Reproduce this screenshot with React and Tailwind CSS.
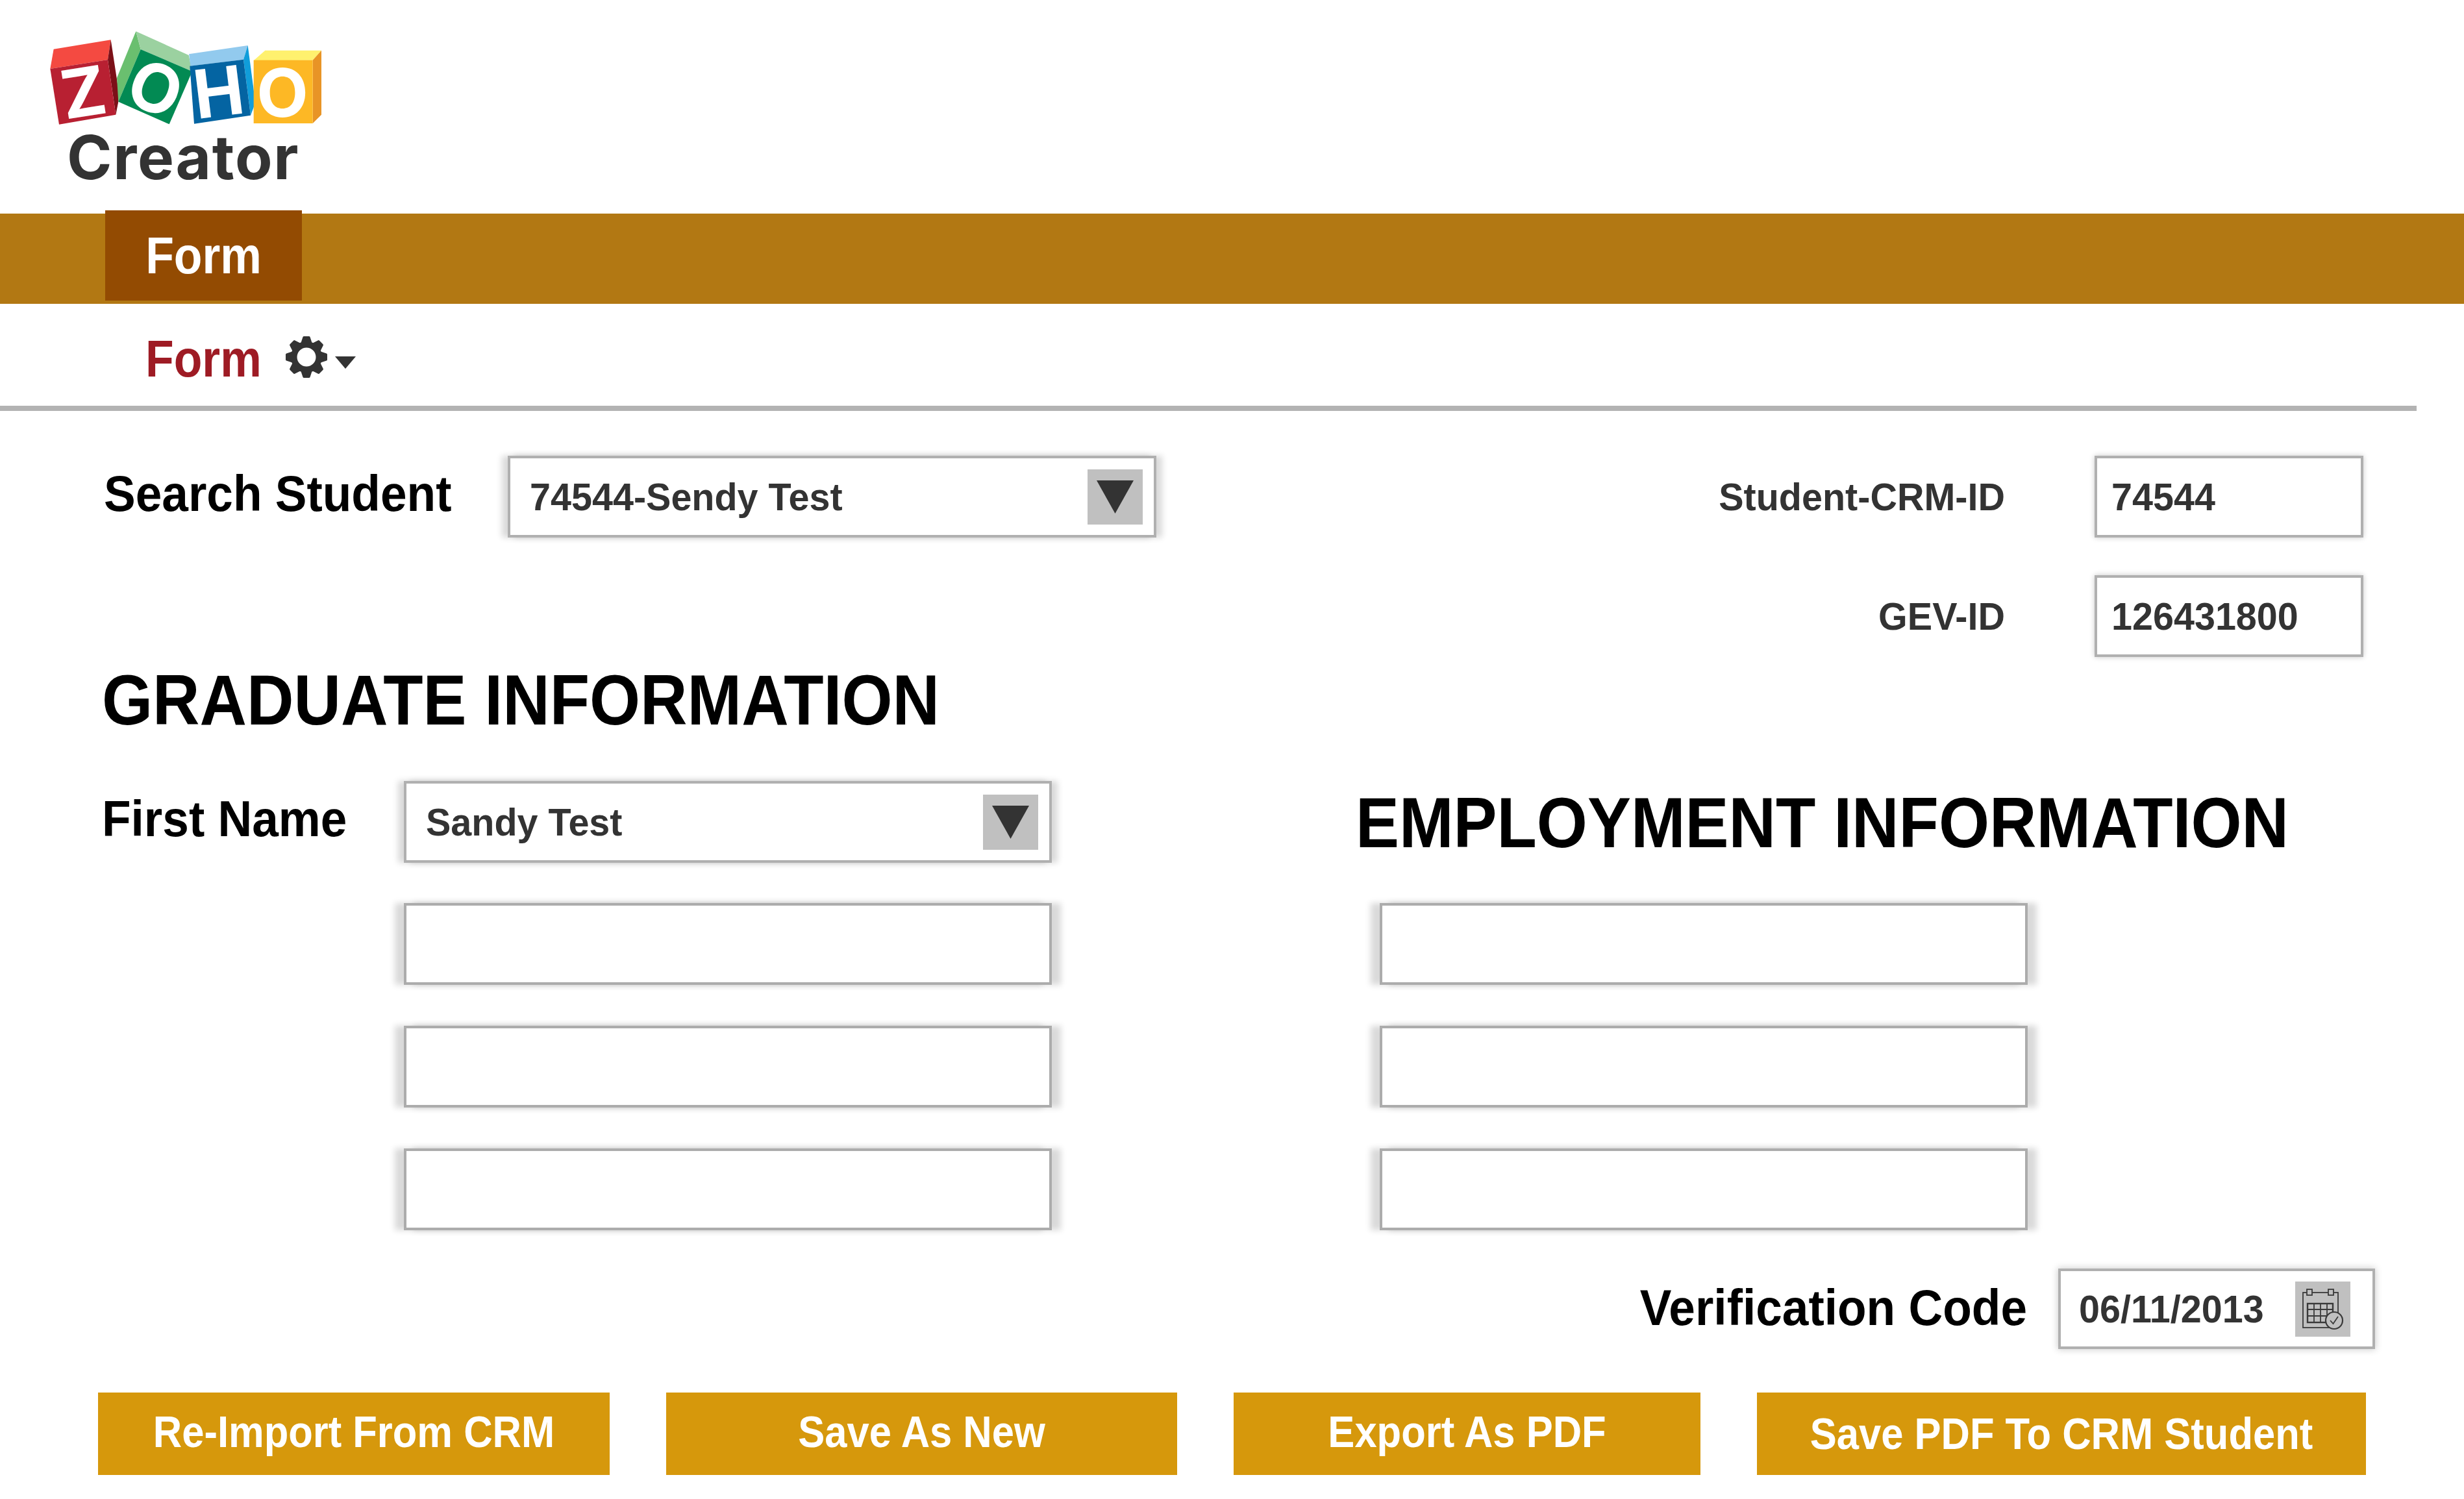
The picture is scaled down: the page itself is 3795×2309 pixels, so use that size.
const sans = "font-['Liberation_Sans',Arial,sans-serif]";
const narrowShadow = "shadow-[0_0_8px_#00000038]";
const dateShadow = "shadow-[0_0_10px_1px_#00000030]";
const selectShadow = "shadow-[-9px_0_9px_0_#00000026,9px_0_9px_0_#00000026]";
const wideShadow = "shadow-[-14px_0_9px_0_#00000026,14px_0_9px_0_#00000026]";

// the shot's text is a little taller than Arial, hence the scale-y on these
const labelText = "inline-block scale-y-[1.065] text-[73px] font-bold text-black";
const valueText = "inline-block scale-y-[1.04] text-[57.5px] font-bold text-[#333]";
const headingText = "inline-block scale-y-[1.09] text-[100.4px] font-bold text-black";
const formText = "inline-block scale-y-[1.12] text-[71.5px] font-bold";

function ZohoLogo() {
  return (
    <svg viewBox="0 0 1380 540" className="block h-[180px] w-[460px]">
      <polygon points="52,228 68,137 332,94 318,186" fill="#f44a41" />
      <polygon points="332,94 372,355 355,440 318,186" fill="#7c1018" />
      <polygon points="52,228 318,186 355,440 93,485" fill="#b82032" />
      <polygon points="448,55 470,138 367,380 360,270" fill="#6abf6f" />
      <polygon points="448,55 692,165 708,240 470,138" fill="#9bd1a0" />
      <polygon points="470,138 708,240 602,484 367,380" fill="#028a53" />
      <polygon points="693,160 965,120 945,185 700,215" fill="#92caee" />
      <polygon points="965,120 1000,385 978,443 945,185" fill="#109dda" />
      <polygon points="697,215 945,185 978,443 717,482" fill="#0464a2" />
      <polygon points="992,190 1045,143 1305,143 1265,188" fill="#fff16e" />
      <polygon points="1305,143 1305,440 1265,480 1265,188" fill="#e89426" />
      <rect x="992" y="188" width="273" height="292" fill="#fdb825" />
      <g fill="#fff" fontFamily="Inter, sans-serif" fontWeight="700" textAnchor="middle" fontSize="310">
        <text x="0" y="0" transform="translate(223 446) rotate(-9)">Z</text>
        <text x="0" y="0" transform="translate(493 420) rotate(24)">O</text>
        <text x="0" y="0" transform="translate(844 446) rotate(-7)">H</text>
        <text x="0" y="0" transform="translate(1125 449)">O</text>
      </g>
    </svg>
  );
}

function Gear() {
  const teeth = [0, 45, 90, 135, 180, 225, 270, 315];
  return (
    <svg viewBox="-32 -32 64 64" className="h-[64px] w-[64px]" fill="#333">
      <circle r="19.25" fill="none" stroke="#333" strokeWidth="9.5" />
      {teeth.map((deg) => (
        <path
          key={deg}
          transform={`rotate(${deg})`}
          d="M-8.5 -22 L-5.5 -31 Q-5 -32 -4 -32 L4 -32 Q5 -32 5.5 -31 L8.5 -22 Z"
        />
      ))}
    </svg>
  );
}

function DownArrow() {
  return (
    <span className="flex h-[85px] w-[85px] shrink-0 items-center justify-center bg-[#c0c0c0]">
      <svg viewBox="0 0 57 51" className="h-[51px] w-[57px]">
        <polygon points="0,0 57,0 28.5,51" fill="#333" />
      </svg>
    </span>
  );
}

function CalendarTile() {
  const gridX = [19, 29, 39, 49, 58];
  const gridY = [34, 43, 53, 63];
  return (
    <span className="block h-[85px] w-[85px] shrink-0 bg-[#c0c0c0]">
      <svg viewBox="0 0 85 85" className="h-[85px] w-[85px]" fill="none" stroke="#3a3a3a" strokeWidth="1.8">
        <rect x="12" y="17" width="54" height="54" />
        <rect x="19" y="34" width="39" height="29" strokeWidth="2.4" />
        {gridX.map((x) => (
          <line key={x} x1={x} y1="34" x2={x} y2="63" />
        ))}
        {gridY.map((y) => (
          <line key={y} x1="19" y1={y} x2="58" y2={y} />
        ))}
        <rect x="18" y="12" width="8" height="9" fill="#c0c0c0" />
        <rect x="51" y="12" width="8" height="9" fill="#c0c0c0" />
        <circle cx="60" cy="60" r="13" fill="#c0c0c0" strokeWidth="2.2" />
        <path d="M54 60 L58.5 65 L66 54" />
      </svg>
    </span>
  );
}

function Select({ value, width }) {
  return (
    <div className={`flex h-[126px] items-center justify-between border-4 border-[#b0b0b0] bg-white pl-[30px] pr-[17px] ${selectShadow} ${width}`}>
      <span className={valueText}>{value}</span>
      <DownArrow />
    </div>
  );
}

function ValueRow({ label, value }) {
  return (
    <div className="flex items-center justify-end gap-[138px]">
      <span className={valueText}>{label}</span>
      <div className={`flex h-[126px] w-[414px] items-center border-4 border-[#b0b0b0] bg-white pl-[22px] ${narrowShadow}`}>
        <span className={valueText}>{value}</span>
      </div>
    </div>
  );
}

function BlankInput() {
  return <div className={`h-[126px] w-[998px] border-4 border-[#acacac] bg-white ${wideShadow}`} />;
}

const buttons = [
  { label: "Re-Import From CRM", className: "w-[788px] pb-[4px]" },
  { label: "Save As New", className: "w-[787px] pb-[4px]" },
  { label: "Export As PDF", className: "w-[719px] pb-[4px]" },
  { label: "Save PDF To CRM Student", className: "w-[938px] pt-[2px]" },
];

export default function App() {
  return (
    <div className={`min-h-screen bg-white ${sans}`}>
      <header className="h-[329px] pl-[60px] pt-[30px]">
        <ZohoLogo />
        <div className="-mt-[18px] pl-[43px] font-['Inter',sans-serif] text-[94px] font-bold leading-[100px] tracking-[0.018em] text-[#333]">
          Creator
        </div>
      </header>

      <nav className="flex h-[139px] items-start bg-[#b27813] pl-[162px]">
        <div className="-mt-[5px] flex h-[139px] w-[303px] items-center justify-center bg-[#934b02] text-white">
          <span className={formText}>Form</span>
        </div>
      </nav>

      <div className="flex h-[157px] items-center pl-[224px]">
        <span className={`${formText} mt-[13px] text-[#9e1b24]`}>Form</span>
        <span className="ml-[37px] mt-[6px]">
          <Gear />
        </span>
        <svg viewBox="0 0 32 19" className="ml-[12px] mt-[24px] h-[19px] w-[32px]">
          <polygon points="0,0 32,0 16,19" fill="#333" />
        </svg>
      </div>

      <div className="h-[8px] w-[3722px] bg-[#b3b3b3]" />

      <section className="flex items-start justify-between pl-[160px] pr-[155px] pt-[69px]">
        <div className="flex items-center">
          <span className="w-[622px] pb-[10px]">
            <span className={labelText}>Search Student</span>
          </span>
          <Select value="74544-Sendy Test" width="w-[999px]" />
        </div>
        <div className="flex flex-col gap-[58px]">
          <ValueRow label="Student-CRM-ID" value="74544" />
          <ValueRow label="GEV-ID" value="126431800" />
        </div>
      </section>

      <h2 className="flex h-[132px] items-center pl-[157px]">
        <span className={headingText}>GRADUATE INFORMATION</span>
      </h2>

      <section className="mt-[59px] flex">
        <div className="w-[2088px] pl-[157px]">
          <div className="flex items-center">
            <span className="w-[465px] pb-[10px]">
              <span className={labelText}>First Name</span>
            </span>
            <Select value="Sandy Test" width="w-[998px]" />
          </div>
          <div className="ml-[465px] mt-[62px] flex flex-col gap-[63px]">
            <BlankInput />
            <BlankInput />
            <BlankInput />
          </div>
        </div>
        <div>
          <h2 className="flex h-[126px] items-center pt-[2px]">
            <span className={headingText}>EMPLOYMENT INFORMATION</span>
          </h2>
          <div className="ml-[37px] mt-[62px] flex flex-col gap-[63px]">
            <BlankInput />
            <BlankInput />
            <BlankInput />
          </div>
        </div>
      </section>

      <section className="mt-[59px] flex items-center justify-end gap-[48px] pr-[137px]">
        <span className="pb-[4px]">
          <span className={labelText}>Verification Code</span>
        </span>
        <div className={`flex h-[124px] w-[488px] items-center justify-between border-4 border-[#b0b0b0] bg-white pl-[28px] pr-[34px] ${dateShadow}`}>
          <span className={valueText}>06/11/2013</span>
          <CalendarTile />
        </div>
      </section>

      <section className="mt-[67px] flex gap-[87px] pl-[151px]">
        {buttons.map((b) => (
          <button key={b.label} className={`flex h-[127px] items-center justify-center bg-[#d6980c] text-white ${b.className}`}>
            <span className="inline-block scale-y-[1.1] text-[61.5px] font-bold">{b.label}</span>
          </button>
        ))}
      </section>
    </div>
  );
}
